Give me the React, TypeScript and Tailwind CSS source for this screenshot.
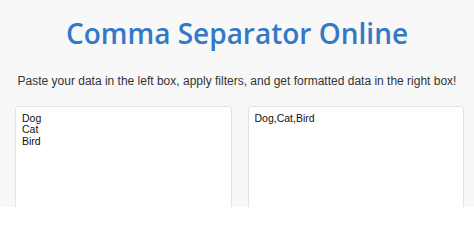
const App = () => {
  return (
    <div className="h-[207px] w-full overflow-hidden bg-[#f8f8f8] font-['Liberation_Sans',Arial,sans-serif]">
      <h1 className="pt-[14px] text-center font-['Open_Sans',sans-serif] text-[28px] font-semibold leading-[38px] text-[#3479c6]">
        Comma Separator Online
      </h1>
      <p className="mt-[22px] text-center text-[12px] leading-[14px] text-[#333]">
        Paste your data in the left box, apply filters, and get formatted data in the right box!
      </p>
      <div className="mt-[18px] grid grid-cols-2 gap-4 pl-[15px] pr-[10px]">
        <div className="h-[120px] rounded-[3px] border border-[#e3e3e3] bg-white px-[6px] py-[6px] text-[10.5px] leading-[11.4px] text-[#111]">
          <div>Dog</div>
          <div>Cat</div>
          <div>Bird</div>
        </div>
        <div className="h-[120px] rounded-[3px] border border-[#e3e3e3] bg-white px-[6px] py-[6px] text-[10.5px] leading-[11.4px] text-[#111]">
          Dog,Cat,Bird
        </div>
      </div>
    </div>
  );
};

export default App;
